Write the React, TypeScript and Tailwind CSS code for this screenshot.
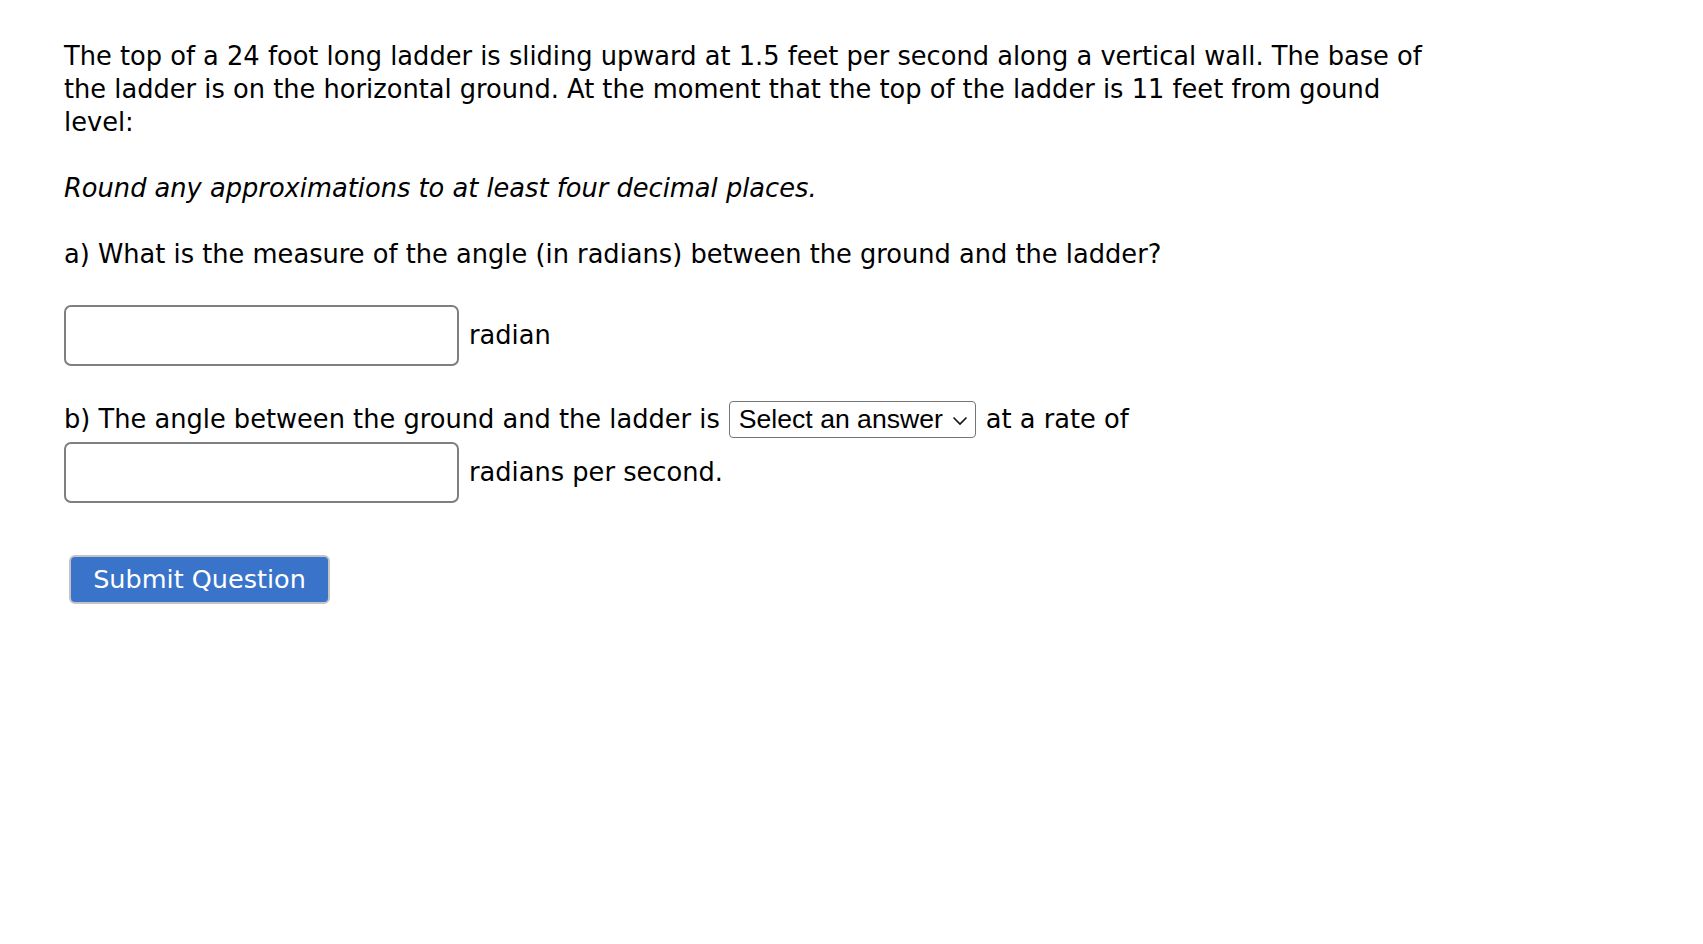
import React from "react";

export default function App() {
  return (
    <div
      className="min-h-screen w-full bg-white text-black pl-[64px] pt-[40px]"
      style={{ fontFamily: "'DejaVu Sans', Verdana, sans-serif" }}
    >
      <div className="text-[25.7px] leading-[33px]">
        <p className="m-0 max-w-[1376px]">
          The top of a 24 foot long ladder is sliding upward at 1.5 feet per second along a vertical wall. The base of
          the ladder is on the horizontal ground. At the moment that the top of the ladder is 11 feet from gound
          level:
        </p>
        <p className="mt-[33px] italic">Round any approximations to at least four decimal places.</p>
        <p className="mt-[33px]">a) What is the measure of the angle (in radians) between the ground and the ladder?</p>

        <div className="mt-[34px] flex items-center">
          <input
            type="text"
            className="w-[395px] h-[61px] border-2 border-[#7f7f7f] rounded-[7px] bg-white outline-none"
          />
          <span className="ml-[10px]">radian</span>
        </div>

        <div className="mt-[34px] flex items-center h-[39px]">
          <span>b) The angle between the ground and the ladder is</span>
          <span className="relative inline-block ml-[9px]">
            <select
              className="appearance-none w-[247px] h-[37px] border-[1.5px] border-[#767676] rounded-[4px] bg-white pl-[9px] pr-[22px] text-[26.6px] leading-[35px] text-black outline-none"
              style={{ fontFamily: "'Liberation Sans', Arial, sans-serif" }}
              defaultValue=""
            >
              <option value="">Select an answer</option>
              <option value="inc">increasing</option>
              <option value="dec">decreasing</option>
            </select>
            <svg
              className="pointer-events-none absolute right-[8px] top-[14px]"
              width="16"
              height="11"
              viewBox="0 0 16 11"
              fill="none"
            >
              <path d="M1.5 2.5 L8 9 L14.5 2.5" stroke="#111" strokeWidth="1.6" />
            </svg>
          </span>
          <span className="ml-[10px]">at a rate of</span>
        </div>

        <div className="mt-[3px] flex items-center">
          <input
            type="text"
            className="w-[395px] h-[61px] border-2 border-[#7f7f7f] rounded-[7px] bg-white outline-none"
          />
          <span className="ml-[10px]">radians per second.</span>
        </div>

        <div className="mt-[52px] pl-[5px]">
          <button
            type="button"
            className="w-[261px] h-[49px] rounded-[6px] border-2 border-[#c4c4c4] bg-[#3a74ca] text-white text-[25.5px] leading-none flex items-center justify-center"
            style={{ fontFamily: "'DejaVu Sans', Verdana, sans-serif" }}
          >
            Submit Question
          </button>
        </div>
      </div>
    </div>
  );
}
